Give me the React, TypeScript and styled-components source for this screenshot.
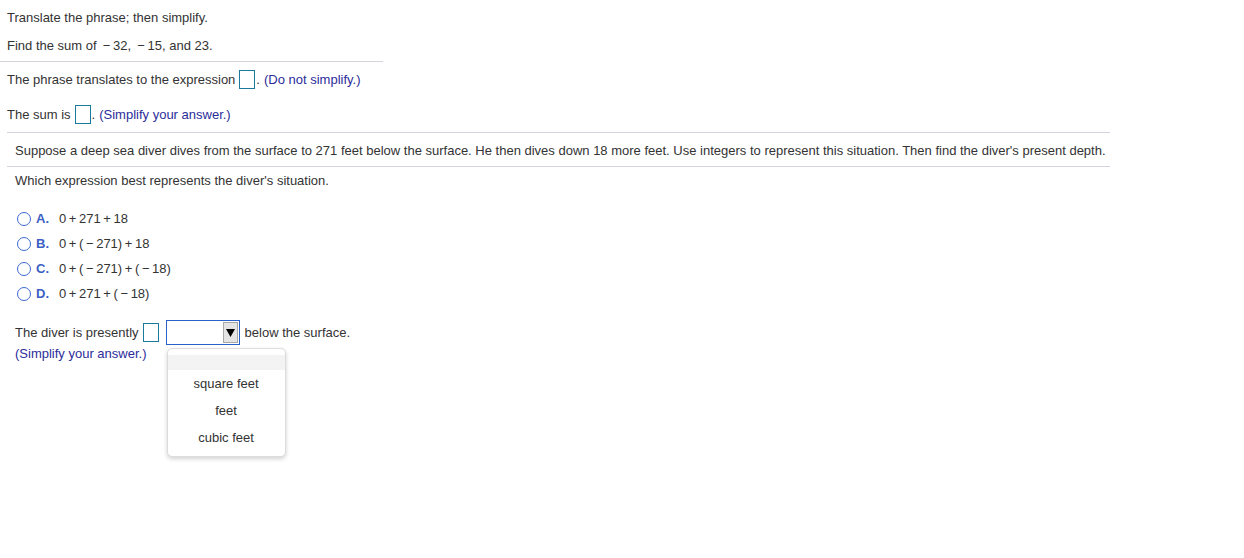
import React from "react";
import styled, { createGlobalStyle } from "styled-components";

const GlobalStyle = createGlobalStyle`
  body {
    margin: 0;
    background: #ffffff;
    font-family: "Liberation Sans", Arial, sans-serif;
    font-size: 13px;
    color: #333333;
  }
`;

const Page = styled.div`
  width: 1244px;
  height: 558px;
  position: relative;
`;

const TopSection = styled.div`
  width: 383px;
`;

const Line = styled.p<{ $top: number }>`
  margin: ${(p) => p.$top}px 0 0;
  padding: 0 7px;
  line-height: 15px;
`;

const Divider = styled.hr`
  margin: 8px 0 0;
  border: 0;
  border-top: 1px solid #d3d3dd;
  height: 0;
`;

const AnswerRow = styled.div<{ $top: number }>`
  display: flex;
  align-items: center;
  margin-top: ${(p) => p.$top}px;
  padding-left: 7px;
  height: 20px;
  white-space: nowrap;
`;

const AnswerBox = styled.span`
  display: inline-block;
  width: 14px;
  height: 17px;
  border: 1px solid #1b7a9c;
  margin: 0 1px 0 4px;
  background: #fff;
`;

const Hint = styled.span`
  color: #2b2d9a;
  margin-left: 4px;
`;

const QuestionSection = styled.div`
  margin: 8px 0 0 7px;
  width: 1103px;
  border-top: 1px solid #d3d3dd;
`;

const Statement = styled.p`
  margin: 0;
  padding: 10px 0 8px 8px;
  line-height: 15px;
  white-space: nowrap;
  border-bottom: 1px solid #d3d3dd;
`;

const Prompt = styled.p`
  margin: 6px 0 0;
  padding: 0 8px;
  line-height: 15px;
`;

const Choices = styled.ul`
  list-style: none;
  margin: 18px 0 0;
  padding: 0 0 0 10px;
`;

const Choice = styled.li`
  display: flex;
  align-items: center;
  height: 25px;
  white-space: pre;
`;

const Radio = styled.span`
  display: inline-block;
  box-sizing: border-box;
  width: 14px;
  height: 14px;
  border: 1.5px solid #3d68d0;
  border-radius: 50%;
  margin-right: 5px;
`;

const Letter = styled.span`
  color: #3b5fc4;
  font-weight: bold;
  width: 23px;
`;

const DiverRow = styled.div`
  display: flex;
  align-items: center;
  margin-top: 14px;
  padding-left: 8px;
  height: 25px;
  white-space: nowrap;
`;

const SelectWrap = styled.div`
  position: relative;
  margin: 0 5px 0 6px;
`;

const Select = styled.div`
  box-sizing: border-box;
  width: 74px;
  height: 25px;
  border: 1px solid #2a62cc;
  display: flex;
  justify-content: flex-end;
  align-items: center;
  padding-right: 1px;
  background: #fff;
`;

const ArrowButton = styled.span`
  box-sizing: border-box;
  width: 15px;
  height: 21px;
  background: #e4e4e4;
  border: 1px solid #a8a8a8;
  display: flex;
  align-items: center;
  justify-content: center;
`;

const Menu = styled.ul`
  position: absolute;
  top: 28px;
  left: 1px;
  box-sizing: border-box;
  width: 119px;
  margin: 0;
  padding: 6px 0 5px;
  list-style: none;
  background: #fff;
  border: 1px solid #dcdcdc;
  border-radius: 5px;
  box-shadow: 0 2px 4px rgba(0, 0, 0, 0.18);
  z-index: 2;
`;

const MenuItem = styled.li<{ $blank?: boolean }>`
  height: ${(p) => (p.$blank ? 15 : 27)}px;
  line-height: ${(p) => (p.$blank ? 15 : 27)}px;
  text-align: center;
  background: ${(p) => (p.$blank ? "#f3f3f3" : "transparent")};
  color: #333;
`;

const SubHint = styled.p`
  margin: 1px 0 0;
  padding-left: 8px;
  line-height: 15px;
  color: #2b2d9a;
`;

// thin spaces around operators, as the math renderer sets them
const t = "\u2009";
const m = "\u2212";
const choices = [
  { letter: "A.", expr: `0${t}+${t}271${t}+${t}18` },
  { letter: "B.", expr: `0${t}+${t}(${t}${m}${t}271)${t}+${t}18` },
  { letter: "C.", expr: `0${t}+${t}(${t}${m}${t}271)${t}+${t}(${t}${m}${t}18)` },
  { letter: "D.", expr: `0${t}+${t}271${t}+${t}(${t}${m}${t}18)` },
];

export default function App() {
  return (
    <Page>
      <GlobalStyle />
      <TopSection>
        <Line $top={10}>Translate the phrase; then simplify.</Line>
        <Line $top={13}>
          Find the sum of {t}
          {m}
          {t}32, {t}
          {m}
          {t}15, and 23.
        </Line>
        <Divider />
        <AnswerRow $top={7}>
          The phrase translates to the expression
          <AnswerBox />.<Hint>(Do not simplify.)</Hint>
        </AnswerRow>
        <AnswerRow $top={15}>
          The sum is
          <AnswerBox />.<Hint>(Simplify your answer.)</Hint>
        </AnswerRow>
      </TopSection>

      <QuestionSection>
        <Statement>
          Suppose a deep sea diver dives from the surface to 271 feet below the surface. He then
          dives down 18 more feet. Use integers to represent this situation. Then find the diver's
          present depth.
        </Statement>
        <Prompt>Which expression best represents the diver's situation.</Prompt>
        <Choices>
          {choices.map((c) => (
            <Choice key={c.letter}>
              <Radio />
              <Letter>{c.letter}</Letter>
              {c.expr}
            </Choice>
          ))}
        </Choices>
        <DiverRow>
          The diver is presently
          <AnswerBox />
          <SelectWrap>
            <Select>
              <ArrowButton>
                <svg width="9" height="8" viewBox="0 0 9 8">
                  <path d="M0 0 H9 L4.5 8 Z" fill="#000" />
                </svg>
              </ArrowButton>
            </Select>
            <Menu>
              <MenuItem $blank />
              <MenuItem>square feet</MenuItem>
              <MenuItem>feet</MenuItem>
              <MenuItem>cubic feet</MenuItem>
            </Menu>
          </SelectWrap>
          below the surface.
        </DiverRow>
        <SubHint>(Simplify your answer.)</SubHint>
      </QuestionSection>
    </Page>
  );
}
